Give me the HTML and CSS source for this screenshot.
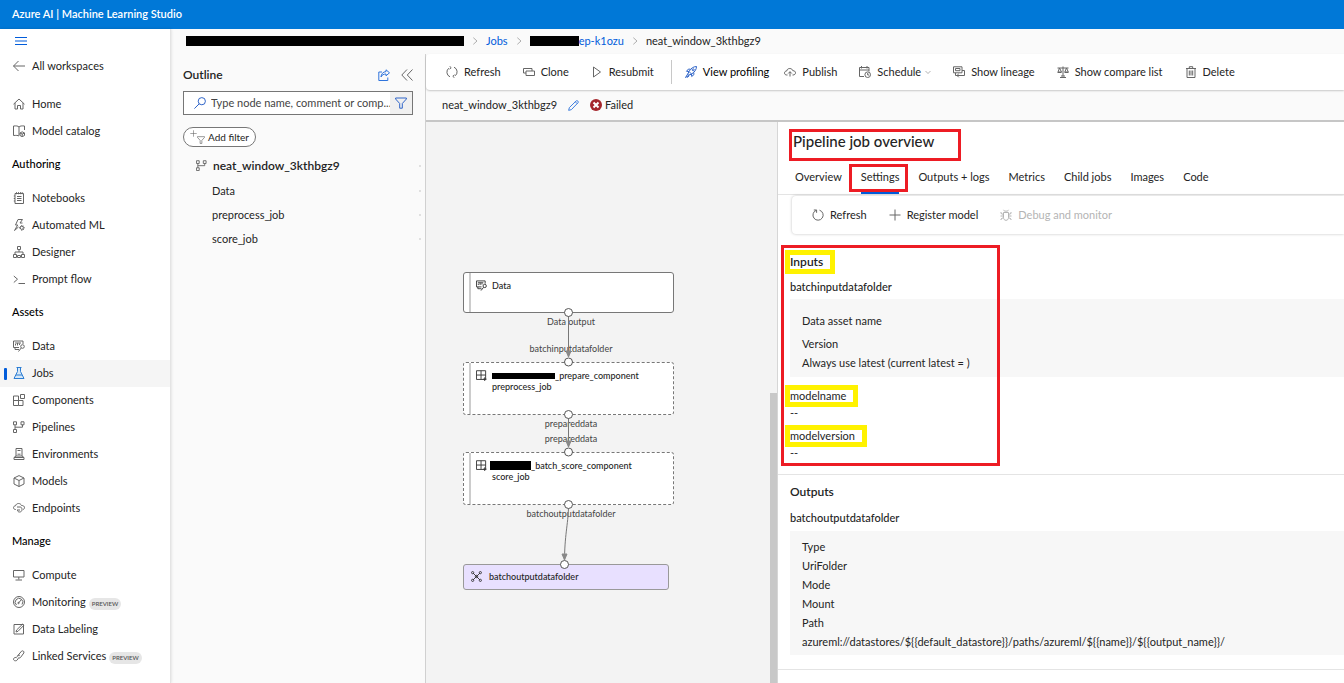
FILE: index.html
```html
<!DOCTYPE html>
<html lang="en">
<head>
  <meta charset="UTF-8">
  <meta name="viewport" content="width=device-width, initial-scale=1.0">
  <title>neat_window_3kthbgz9 - Azure AI | Machine Learning Studio</title>
  <link rel="stylesheet" href="styles.css">
</head>
<body>
  <!-- icon sprite -->
  <svg class="sprite" aria-hidden="true">
    <symbol id="i-menu" viewBox="0 0 12 12"><path d="M0 2.500h12M0 6h12M0 9.500h12"/></symbol>
    <symbol id="i-back" viewBox="0 0 12 12"><path d="M12 6H.5M5.500 1L.5 6l5 5"/></symbol>
    <symbol id="i-home" viewBox="0 0 12 12"><path d="M.5 6.200L6 1l5.500 5.200M2 5v6h2.500V7.500h3V11H10V5"/></symbol>
    <symbol id="i-catalog" viewBox="0 0 12 12"><path d="M6 2v8.500M6 2C5 .8 3 .8.500 1v9.500c2.500-.2 4.500-.2 5.500.5M6 2C7 .8 9 .8 11.500 1v4M7 8l2.200-1.200L11.500 8v2.500l-2.300 1.200L7 10.500zM7 8l2.200 1 2.300-1M9.200 9v2.700"/></symbol>
    <symbol id="i-notebook" viewBox="0 0 12 12"><path d="M2 1.500h8.500v10H2zM4 4.500h4.500M4 6.500h4.500M4 8.500h4.500M3.500.2v2M5.500.2v2M7.500.2v2M9.200.2v2M.8 4H2M.8 6.500H2M.8 9H2"/></symbol>
    <symbol id="i-automl" viewBox="0 0 12 12"><path d="M5 .5h4.500L7 4h2.500M5 .5L2.500 6h2.200L1.500 11.500 5.500 8"/><circle cx="8.800" cy="8.800" r="1.600"/><path d="M8.800 6v1M8.800 10.600v1.200M6 8.800h1.200M10.600 8.800h1.200M7 7l.6.6M10 10l.8.8M10.700 7l-.7.6"/></symbol>
    <symbol id="i-designer" viewBox="0 0 12 12"><path d="M4.500.5h3v3h-3zM.5 8.500h3v3h-3zM8.500 8.500h3v3h-3zM6 3.500V6M2 8.500V6h8v2.500M4.500 9.500h3v2h-3z"/></symbol>
    <symbol id="i-prompt" viewBox="0 0 12 12"><path d="M.8 3l3.700 3.200L.8 9.500M5.500 10.500H12"/></symbol>
    <symbol id="i-data" viewBox="0 0 12 12"><path d="M6 7.500H.5V1h9.500v3M2 7.500v2h4M2.500 5.500V4M4.500 5.500V3M6.500 5V3.500"/><circle cx="9.500" cy="6.500" r="1.800"/><path d="M8.300 7.900L5.500 11.500M2 3h6"/></symbol>
    <symbol id="i-jobs" viewBox="0 0 12 12"><path d="M3.500.5h5M4.500.5v4L1 11.500h10L7.500 4.500v-4M3 8h6"/></symbol>
    <symbol id="i-components" viewBox="0 0 12 12"><path d="M.5 2h5v9.500H.5zM.5 6.500h9.500v5H5.500M7.500.5h4v4h-4z"/></symbol>
    <symbol id="i-pipeline" viewBox="0 0 12 12"><path d="M.5.8h3v3h-3zM8 .8h3v3H8zM.5 8.500h3v3h-3zM2 3.800v4.700M2 6.200h7.500V3.800"/></symbol>
    <symbol id="i-env" viewBox="0 0 12 12"><path d="M3 .5h6V8H3zM4.500 2.500h3M1 11.500V9.500h10v2zM3 8L1 9.500M9 8l2 1.500M4.500 6.200h3"/></symbol>
    <symbol id="i-model" viewBox="0 0 12 12"><path d="M6 .6l5 2.400v6L6 11.500 1 9V3zM1 3l5 2.500L11 3M6 5.500v6"/></symbol>
    <symbol id="i-endpoint" viewBox="0 0 12 12"><path d="M3 7.500H2.500C1.300 7.500.5 6.700.5 5.600S1.300 4 2.500 3.800C3 2.200 4.200 1.500 5.600 1.500S8 2.300 8.500 3.500c1.800-.1 3 .8 3 2.200 0 1-.8 1.700-1.500 1.800"/><path d="M4 5h3c1.200 0 2 .9 2 2.500S8 10 6.500 10 4.500 9 4.500 8M4 8h3"/></symbol>
    <symbol id="i-compute" viewBox="0 0 12 12"><path d="M.5 1.500h10.500V8H.5zM5.800 8v2.500M2.500 11h6.500"/></symbol>
    <symbol id="i-monitor" viewBox="0 0 12 12"><circle cx="6" cy="6" r="5.500"/><path d="M3.500 9A3.800 3.800 0 1 1 9 8.500M5.500 7L8.500 3.500"/><circle cx="5.500" cy="7" r=".7"/></symbol>
    <symbol id="i-label" viewBox="0 0 12 12"><path d="M1 1.500h9.500v9.500H1zM3 9l.6-2L9.500 1.200l1.300 1.200L5 8.300z"/></symbol>
    <symbol id="i-link" viewBox="0 0 12 12"><path d="M4 6.500L8.500 1.200c1-1 3.200.2 2.300 1.800L7.500 7.500c-.8 1-2 .4-1.600-.6M7 5.500C6 4.800 5 5.500 4.500 6.500M5.500 8L4.200 10c-1 1.500-4.500.8-3.500-1.500.5-1 2-1.300 3-.8"/></symbol>
    <symbol id="i-share" viewBox="0 0 12 12"><path d="M4 3H.8v8.500h9V8.500M8 .8l3.500 3L8 6.800V5C5.500 5 4 6 3 8c.2-3 2-5.200 5-5.400z"/></symbol>
    <symbol id="i-collapse" viewBox="0 0 12 12"><path d="M6 .5L.8 6 6 11.500M11.500.5L6.300 6l5.200 5.500"/></symbol>
    <symbol id="i-search" viewBox="0 0 12 12"><circle cx="7.800" cy="4.200" r="3.600"/><path d="M5.200 6.800L.4 11.600"/></symbol>
    <symbol id="i-funnel" viewBox="0 0 12 12"><path d="M.6 1h10.800v1L7.300 6.500v4.700H4.700V6.500L.6 2z"/></symbol>
    <symbol id="i-refresh" viewBox="0 0 12 12"><path d="M4 10.800A5 5 0 0 1 3 2.100M8 1.200a5 5 0 0 1 1 8.700M3.500.2L5.200 1.700 3.600 3.200M8.500 8.800L6.800 10.300l1.700 1.500"/></symbol>
    <symbol id="i-clone" viewBox="0 0 12 12"><path d="M3 7H.5V2.500H9V5M3 5h8.500v4.500H3z"/></symbol>
    <symbol id="i-play" viewBox="0 0 12 12"><path d="M2.500 1l7 5-7 5z"/></symbol>
    <symbol id="i-rocket" viewBox="0 0 12 12"><path d="M4 5.500C6 2 8.500.6 11.500.5 11.400 3.500 10 6 6.500 8zM4 5.500L1.500 5.300 3.500 3l2 .3M6.500 8l.2 2.500L9 8.500l-.3-2M3 7.500L.5 11.500 4.500 9M4 5.500L3 7.500 4.500 9l2-1M2 11.500L4 10"/><circle cx="8.200" cy="3.800" r="1"/></symbol>
    <symbol id="i-publish" viewBox="0 0 12 12"><path d="M3.500 9H2.800C1.400 9 .5 8.200.5 7S1.400 5 2.700 5C3 3.300 4.200 2.500 5.800 2.500S8.400 3.400 8.800 4.700c1.700 0 2.700.8 2.700 2.100S10.500 9 9 9h-.5M6 10.500V5.800M4.200 7.500L6 5.700l1.800 1.800"/></symbol>
    <symbol id="i-schedule" viewBox="0 0 12 12"><path d="M5 10.500H.5v-9H10v4M.5 4H10M2.500 0v2.500M8 0v2.500"/><circle cx="8.700" cy="8.700" r="2.800"/><path d="M8.700 7v2h1.500"/></symbol>
    <symbol id="i-lineage" viewBox="0 0 12 12"><path d="M.5.8h8.500v6H.5zM2.500 2.500h4.500v2.200H2.500zM9 4.500h2.500v5H4M2.500 6.800v2.700h2M5.800 7.800L4 9.500l1.800 1.800"/></symbol>
    <symbol id="i-compare" viewBox="0 0 12 12"><path d="M6 .5v10M3 11.500h6M4 10h4M.5 2h11M2.500 2L1 6h3.500zM9.500 2L7.800 6h3.500zM.5 6.500h4M7.500 6.500h4"/></symbol>
    <symbol id="i-trash" viewBox="0 0 12 12"><path d="M1 2.500h10M4.300 2.300V.7h3.400v1.600M2 2.500v9h8v-9M4.300 4.500v5M6 4.500v5M7.700 4.500v5"/></symbol>
    <symbol id="i-pencil" viewBox="0 0 12 12"><path d="M.7 11.300l.8-3L9 .9c1.400-.6 2.600.6 2 2L3.700 10.500zM8 2l2 2"/></symbol>
    <symbol id="i-reload" viewBox="0 0 12 12"><path d="M7.500 1.200a5.100 5.100 0 1 1-3.200.1M1.800 1h2.800v2.800"/></symbol>
    <symbol id="i-plus" viewBox="0 0 12 12"><path d="M6 .5v11M.5 6h11"/></symbol>
    <symbol id="i-bug" viewBox="0 0 12 12"><path d="M3.500 3.500h5v5c0 1.700-1 2.800-2.500 2.800S3.500 10.200 3.500 8.500zM4.500 3.500c0-2 3-2 3 0M3.500 5.500L1 4.500V3M8.500 5.500l2.500-1V3M3.500 7H.5M8.500 7h3M3.500 8.500L1 10v1M8.500 8.500L11 10v1M4.500 2l-1-1.200M7.500 2l1-1.200"/></symbol>
    <symbol id="i-chevron" viewBox="0 0 12 12"><path d="M3.500 1L9 6l-5.500 5"/></symbol>
    <symbol id="i-down" viewBox="0 0 12 12"><path d="M1 4l5 5 5-5"/></symbol>
    <symbol id="i-block" viewBox="0 0 12 12"><path d="M.5.800h10v9.500H.5zM5.500.800v9.500M.5 5.500h10M7.500 10h4M9.500 8v4"/></symbol>
    <symbol id="i-graph" viewBox="0 0 12 12"><path d="M2.200 2.200l7.600 7.600M9.800 2.200L2.200 9.800"/><circle cx="1.800" cy="1.800" r="1.200"/><circle cx="10.200" cy="1.800" r="1.200"/><circle cx="1.800" cy="10.200" r="1.200"/><circle cx="10.200" cy="10.200" r="1.200"/><circle cx="6" cy="6" r="1.300"/></symbol>
  </svg>

  <header class="topbar">Azure AI | Machine Learning Studio</header>

  <div class="shell">
    <nav class="sidebar">
      <button class="menu-btn" aria-label="Toggle menu"><svg class="icon"><use href="#i-menu"/></svg></button>
      <a class="nav-item nav-back" href="#"><svg class="icon"><use href="#i-back"/></svg>All workspaces</a>
      <a class="nav-item" href="#"><svg class="icon"><use href="#i-home"/></svg>Home</a>
      <a class="nav-item" href="#"><svg class="icon"><use href="#i-catalog"/></svg>Model catalog</a>
      <h2 class="nav-title">Authoring</h2>
      <a class="nav-item" href="#"><svg class="icon"><use href="#i-notebook"/></svg>Notebooks</a>
      <a class="nav-item" href="#"><svg class="icon"><use href="#i-automl"/></svg>Automated ML</a>
      <a class="nav-item" href="#"><svg class="icon"><use href="#i-designer"/></svg>Designer</a>
      <a class="nav-item" href="#"><svg class="icon"><use href="#i-prompt"/></svg>Prompt flow</a>
      <h2 class="nav-title">Assets</h2>
      <a class="nav-item" href="#"><svg class="icon"><use href="#i-data"/></svg>Data</a>
      <a class="nav-item active" href="#"><svg class="icon"><use href="#i-jobs"/></svg>Jobs</a>
      <a class="nav-item" href="#"><svg class="icon"><use href="#i-components"/></svg>Components</a>
      <a class="nav-item" href="#"><svg class="icon"><use href="#i-pipeline"/></svg>Pipelines</a>
      <a class="nav-item" href="#"><svg class="icon"><use href="#i-env"/></svg>Environments</a>
      <a class="nav-item" href="#"><svg class="icon"><use href="#i-model"/></svg>Models</a>
      <a class="nav-item" href="#"><svg class="icon"><use href="#i-endpoint"/></svg>Endpoints</a>
      <h2 class="nav-title">Manage</h2>
      <a class="nav-item" href="#"><svg class="icon"><use href="#i-compute"/></svg>Compute</a>
      <a class="nav-item" href="#"><svg class="icon"><use href="#i-monitor"/></svg>Monitoring <span class="badge">PREVIEW</span></a>
      <a class="nav-item" href="#"><svg class="icon"><use href="#i-label"/></svg>Data Labeling</a>
      <a class="nav-item" href="#"><svg class="icon"><use href="#i-link"/></svg>Linked Services <span class="badge">PREVIEW</span></a>
    </nav>

    <main class="main">
      <div class="breadcrumb">
        <span class="redacted redacted-workspace"></span>
        <svg class="icon sep"><use href="#i-chevron"/></svg>
        <a href="#">Jobs</a>
        <svg class="icon sep"><use href="#i-chevron"/></svg>
        <a href="#"><span class="redacted redacted-exp"></span>ep-k1ozu</a>
        <svg class="icon sep"><use href="#i-chevron"/></svg>
        <span>neat_window_3kthbgz9</span>
      </div>

      <div class="workspace">
        <aside class="outline">
          <div class="outline-head">
            <h2>Outline</h2>
            <button class="share" aria-label="Share"><svg class="icon"><use href="#i-share"/></svg></button>
            <button aria-label="Collapse"><svg class="icon"><use href="#i-collapse"/></svg></button>
          </div>
          <div class="search">
            <svg class="icon"><use href="#i-search"/></svg>
            <input type="text" aria-label="Search nodes" placeholder="Type node name, comment or comp...">
            <button aria-label="Filter"><svg class="icon"><use href="#i-funnel"/></svg></button>
          </div>
          <button class="add-filter"><svg class="plus"><use href="#i-plus"/></svg><svg class="funnel"><use href="#i-funnel"/></svg>Add filter</button>
          <ul class="tree">
            <li class="tree-root"><svg class="icon"><use href="#i-pipeline"/></svg>neat_window_3kthbgz9</li>
            <li>Data</li>
            <li>preprocess_job</li>
            <li>score_job</li>
          </ul>
        </aside>

        <section class="job">
          <div class="toolbar">
            <button><svg class="icon"><use href="#i-refresh"/></svg>Refresh</button>
            <button><svg class="icon"><use href="#i-clone"/></svg>Clone</button>
            <button><svg class="icon"><use href="#i-play"/></svg>Resubmit</button>
            <span class="divider"></span>
            <button class="profiling"><svg class="icon"><use href="#i-rocket"/></svg>View profiling</button>
            <button><svg class="icon"><use href="#i-publish"/></svg>Publish</button>
            <button><svg class="icon"><use href="#i-schedule"/></svg>Schedule<svg class="caret"><use href="#i-down"/></svg></button>
            <button><svg class="icon"><use href="#i-lineage"/></svg>Show lineage</button>
            <button><svg class="icon"><use href="#i-compare"/></svg>Show compare list</button>
            <button><svg class="icon"><use href="#i-trash"/></svg>Delete</button>
          </div>
          <div class="job-name">
            <span>neat_window_3kthbgz9</span>
            <button aria-label="Rename"><svg class="icon"><use href="#i-pencil"/></svg></button>
            <span class="status">
              <svg class="fail" viewBox="0 0 12 12"><circle cx="6" cy="6" r="6"/><path d="M3.500 3.500l5 5M8.500 3.500l-5 5"/></svg>
              Failed
            </span>
          </div>

          <div class="split">
            <div class="canvas">
              <div class="node node-data"><svg class="icon"><use href="#i-data"/></svg><div>Data</div></div>
              <div class="node node-prep"><svg class="icon"><use href="#i-block"/></svg><div><span class="redacted redacted-prep"></span>_prepare_component<br>preprocess_job</div></div>
              <div class="node node-score"><svg class="icon"><use href="#i-block"/></svg><div><span class="redacted redacted-score"></span>_batch_score_component<br>score_job</div></div>
              <div class="node node-output"><svg class="icon"><use href="#i-graph"/></svg><div>batchoutputdatafolder</div></div>
              <span class="port-label label-a">Data output</span>
              <span class="port-label label-b">batchinputdatafolder</span>
              <span class="port-label label-c">prepareddata</span>
              <span class="port-label label-d">prepareddata</span>
              <span class="port-label label-e">batchoutputdatafolder</span>
              <svg class="edges" viewBox="0 0 340 480" aria-hidden="true">
                <path class="edge" d="M142.500 191v42M142.500 293v32M142.500 383C142.500 400 139 410 138.500 436"/>
                <path class="arrow" d="M140 229h5l-2.500 6zM140 319h5l-2.500 6zM136 432h5l-2.500 6z"/>
                <circle cx="142.500" cy="190.500" r="4"/><circle cx="142.500" cy="240" r="4"/>
                <circle cx="142.500" cy="292.500" r="4"/><circle cx="142.500" cy="330" r="4"/>
                <circle cx="142.500" cy="382.500" r="4"/><circle cx="138.500" cy="442.500" r="4"/>
              </svg>
              <div class="scrollbar"></div>
            </div>

            <section class="details">
              <h1><span class="mark mark-title">Pipeline job overview</span></h1>
              <div class="tabs" role="tablist">
                <button role="tab">Overview</button>
                <button role="tab" class="selected mark mark-tab" aria-selected="true">Settings</button>
                <button role="tab">Outputs + logs</button>
                <button role="tab">Metrics</button>
                <button role="tab">Child jobs</button>
                <button role="tab">Images</button>
                <button role="tab">Code</button>
              </div>
              <div class="commands">
                <button><svg class="icon"><use href="#i-reload"/></svg>Refresh</button>
                <button><svg class="icon"><use href="#i-plus"/></svg>Register model</button>
                <button disabled><svg class="icon"><use href="#i-bug"/></svg>Debug and monitor</button>
              </div>

              <div class="group inputs">
                <h3><span class="mark mark-yellow">Inputs</span></h3>
                <h4>batchinputdatafolder</h4>
                <dl class="box box-input">
                  <dt>Data asset name</dt>
                  <dt>Version</dt>
                  <dd>Always use latest (current latest = )</dd>
                </dl>
                <dl class="params">
                  <dt><span class="mark mark-yellow">modelname</span></dt>
                  <dd>--</dd>
                  <dt><span class="mark mark-yellow">modelversion</span></dt>
                  <dd>--</dd>
                </dl>
              </div>

              <div class="group outputs">
                <h3>Outputs</h3>
                <h4>batchoutputdatafolder</h4>
                <dl class="box box-output">
                  <dt>Type</dt>
                  <dd>UriFolder</dd>
                  <dt>Mode</dt>
                  <dd>Mount</dd>
                  <dt>Path</dt>
                  <dd>azureml://datastores/${{default_datastore}}/paths/azureml/${{name}}/${{output_name}}/</dd>
                </dl>
              </div>
            </section>
          </div>
        </section>
      </div>
    </main>
  </div>
</body>
</html>
```

FILE: styles.css
```css
*, *::before, *::after { box-sizing: border-box; }
body {
  margin: 0;
  height: 100vh;
  display: flex;
  flex-direction: column;
  overflow: hidden;
  font-family: Lato, "Open Sans", sans-serif;
  font-size: 11px;
  line-height: 16px;
  color: #242424;
  background: #fafafa;
}
h1, h2, h3, h4, ul, dl, dd { margin: 0; padding: 0; }
a { color: #015cda; text-decoration: none; }
button { display: flex; align-items: center; gap: 6px; padding: 0; border: 0; background: none; font: inherit; color: inherit; white-space: nowrap; }
.sprite { display: none; }
.icon { width: 12px; height: 12px; flex: none; }
svg { fill: none; stroke: #666; stroke-width: 1; overflow: visible; }
.redacted { display: inline-block; background: #000; }

.topbar { flex: none; height: 29px; padding-left: 12px; line-height: 28px; background: #0078d7; color: #fff; font-weight: 600; }
.shell { flex: 1; min-height: 0; display: flex; }

/* left navigation */
.sidebar { position: relative; z-index: 1; width: 171px; flex: none; background: #fff; border-right: 1px solid #e4e4e4; box-shadow: 0 0 3px rgba(0,0,0,0.15); }
.menu-btn { height: 24px; padding-left: 15px; }
.menu-btn svg { stroke: #015cda; }
.nav-item { display: flex; align-items: center; gap: 7px; height: 27px; padding: 0 0 1px 13px; color: #242424; white-space: nowrap; }
.nav-back { margin-bottom: 11px; }
.nav-title { height: 40px; padding-left: 12px; line-height: 37px; font-size: 11px; font-weight: 500; color: #000; }
.nav-item.active { position: relative; background: #f5f5f5; }
.nav-item.active::before { content: ""; position: absolute; left: 4px; top: 8px; width: 3px; height: 12px; border-radius: 1px; background: #015cda; }
.nav-item.active svg { stroke: #2b7cd3; fill: #d6e8f8; }
.badge { margin: 3px 0 0 -4px; padding: 0 3px; border-radius: 6px; background: #e6e6e6; color: #555; font-size: 6px; line-height: 12px; font-weight: 600; }

.main { flex: 1; min-width: 0; display: flex; flex-direction: column; }
.breadcrumb { flex: none; display: flex; align-items: center; gap: 7px; height: 25px; padding: 0 0 2px 15px; }
.breadcrumb a { display: flex; align-items: center; }
.sep { width: 8px; height: 8px; stroke: #888; }
.redacted-workspace { width: 278px; height: 10px; }
.redacted-exp { width: 49px; height: 10px; }
.workspace { flex: 1; min-height: 0; display: flex; }

/* outline */
.outline { width: 254px; flex: none; padding: 8px 12px 0 12px; }
.outline-head { display: flex; align-items: center; gap: 11px; height: 26px; margin-bottom: 3px; }
.outline-head h2 { flex: 1; font-size: 12px; font-weight: 600; }
.share svg { stroke: #2f74dc; }
.search { display: flex; align-items: center; height: 24px; padding-left: 10px; border: 1px solid #767676; background: #fff; }
.search .icon { stroke: #2f64c8; }
.search input { flex: 1; min-width: 0; padding: 0 0 0 5px; border: 0; outline: 0; font: inherit; background: none; }
.search input::placeholder { color: #444; opacity: 1; }
.search button { justify-content: center; width: 22px; height: 22px; background: #f0f0f0; }
.add-filter { height: 20px; margin-top: 12px; padding: 0 6px; gap: 0; border: 1px solid #777; border-radius: 10px; background: #fff; font-size: 10px; }
.add-filter .plus { width: 7px; height: 7px; margin-bottom: 7px; }
.add-filter .funnel { width: 8px; height: 8px; margin: 5px 3px 0 0; }
.tree { margin: 6px -8px 0 0; list-style: none; }
.tree li { display: flex; align-items: center; height: 24px; padding-left: 29px; }
.tree li::after { content: ""; width: 2px; height: 2px; margin-left: auto; background: #e0e0e0; }
.tree .tree-root { height: 26px; gap: 6px; padding: 0 0 1px 13px; font-size: 12px; font-weight: 600; }
.tree-root .icon { width: 11px; height: 11px; }

/* job toolbar */
.job { flex: 1; min-width: 0; display: flex; flex-direction: column; border-left: 1px solid #d0d0d0; }
.toolbar { flex: none; display: flex; align-items: center; gap: 22px; height: 36px; padding-left: 20px; background: #fff; border-radius: 4px 0 0 4px; box-shadow: 0 1px 2px rgba(0,0,0,0.2); }
.divider { width: 1px; height: 24px; margin: 0 -9px 0 -5px; background: #c8c8c8; }
.profiling { margin-right: -7px; color: #000; }
.profiling svg { stroke: #2f64c8; }
.caret { width: 6px; height: 6px; margin-left: -2px; }
.job-name { flex: none; display: flex; align-items: center; gap: 11px; height: 32px; padding-left: 16px; border-bottom: 2px solid #c6c6c6; }
.job-name .icon { width: 11px; height: 11px; stroke: #2f74dc; }
.status { display: flex; align-items: center; gap: 3px; }
.fail { width: 12px; height: 12px; fill: #a4262c; stroke: none; }
.fail path { stroke: #fff; stroke-width: 2; }
.split { flex: 1; min-height: 0; display: flex; }

/* pipeline graph */
.canvas { position: relative; width: 351px; flex: none; background: #f3f3f3; overflow: hidden; font-size: 9px; line-height: 11px; }
.node { position: absolute; left: 37px; display: flex; gap: 5px; width: 211px; padding: 7px 0 0 12px; background: #fff; border: 1px solid #777; border-radius: 3px; white-space: nowrap; font-weight: 500; }
.node .icon { width: 11px; height: 11px; stroke: #333; }
.node::before { content: ""; position: absolute; left: 5px; top: 0; bottom: 0; width: 2px; background: #ccc; }
.node-data { top: 150px; height: 41px; }
.node-prep { top: 240px; height: 53px; border-style: dashed; }
.node-score { top: 330px; height: 53px; border-style: dashed; }
.node-output { top: 442px; width: 206px; height: 26px; padding: 6px 0 0 7px; gap: 7px; background: #e8e0ff; border-color: #999; }
.node-output::before { display: none; }
.redacted-prep { width: 63px; height: 6px; }
.redacted-score { width: 41px; height: 9px; margin-left: -2px; vertical-align: -1px; }
.port-label { position: absolute; left: 45px; width: 200px; text-align: center; color: #444; }
.label-a { top: 194px; }
.label-b { top: 221px; }
.label-c { top: 296px; }
.label-d { top: 311px; }
.label-e { top: 386px; }
.edges { position: absolute; left: 0; top: 0; width: 340px; height: 480px; }
.edge { stroke: #777; }
.arrow { fill: #888; stroke: #888; }
.edges circle { fill: #fff; stroke: #555; }
.scrollbar { position: absolute; right: 0; top: 271px; bottom: 0; width: 7px; background: #c8c8c8; }

/* details panel */
.details { flex: 1; min-width: 0; background: #fff; border-left: 1px solid #d6d6d6; overflow: hidden; }
.details h1 { padding: 9px 15px 1px; font-size: 15px; line-height: 20px; font-weight: 500; }
.tabs { display: flex; gap: 19px; height: 43px; padding: 8px 17px 0; border-bottom: 1px solid #e4e4e4; }
.tabs .selected { box-shadow: inset 0 -2px #015cda; }
.commands { display: flex; gap: 22px; height: 38px; margin: 1px 0 0 14px; padding-left: 20px; border-radius: 4px 0 0 4px; box-shadow: 0 0 3px rgba(0,0,0,0.25); }
.commands button:disabled { color: #b4b4b4; }
.commands button:disabled svg { stroke: #b4b4b4; }
.group { position: relative; padding-left: 12px; border-bottom: 1px solid #e4e4e4; }
.group h3 { font-size: 12px; font-weight: 600; line-height: 16px; }
.group h4 { margin-top: 9px; font-size: 11px; font-weight: 500; line-height: 16px; }
.inputs { padding-top: 20px; padding-bottom: 13px; }
.outputs { padding-top: 9px; padding-bottom: 14px; }
.outputs h4 { margin-top: 10px; }
.box { padding-left: 12px; background: #f7f7f7; line-height: 19px; }
.box-input { margin-top: 4px; padding-top: 12px; padding-bottom: 5px; }
.box-input dt + dt { margin-top: 4px; }
.box-output { margin-top: 5px; padding-top: 6px; padding-bottom: 4px; }
.params { padding-top: 10px; line-height: 17px; }
.params dd + dt { margin-top: 6px; }

/* highlight frames */
.mark { position: relative; }
.mark::after, .inputs::after { content: ""; position: absolute; border: 3px solid #ed1c24; }
.mark-title::after { inset: -3px -27px -11px -4px; }
.mark-tab::after { inset: 4px -9px 2px -12px; }
.mark-yellow::after { inset: -4px -12px -5px -5px; border: 5px solid #fff200; }
.inputs::after { left: 3px; top: 11px; width: 219px; bottom: 8px; }
```
